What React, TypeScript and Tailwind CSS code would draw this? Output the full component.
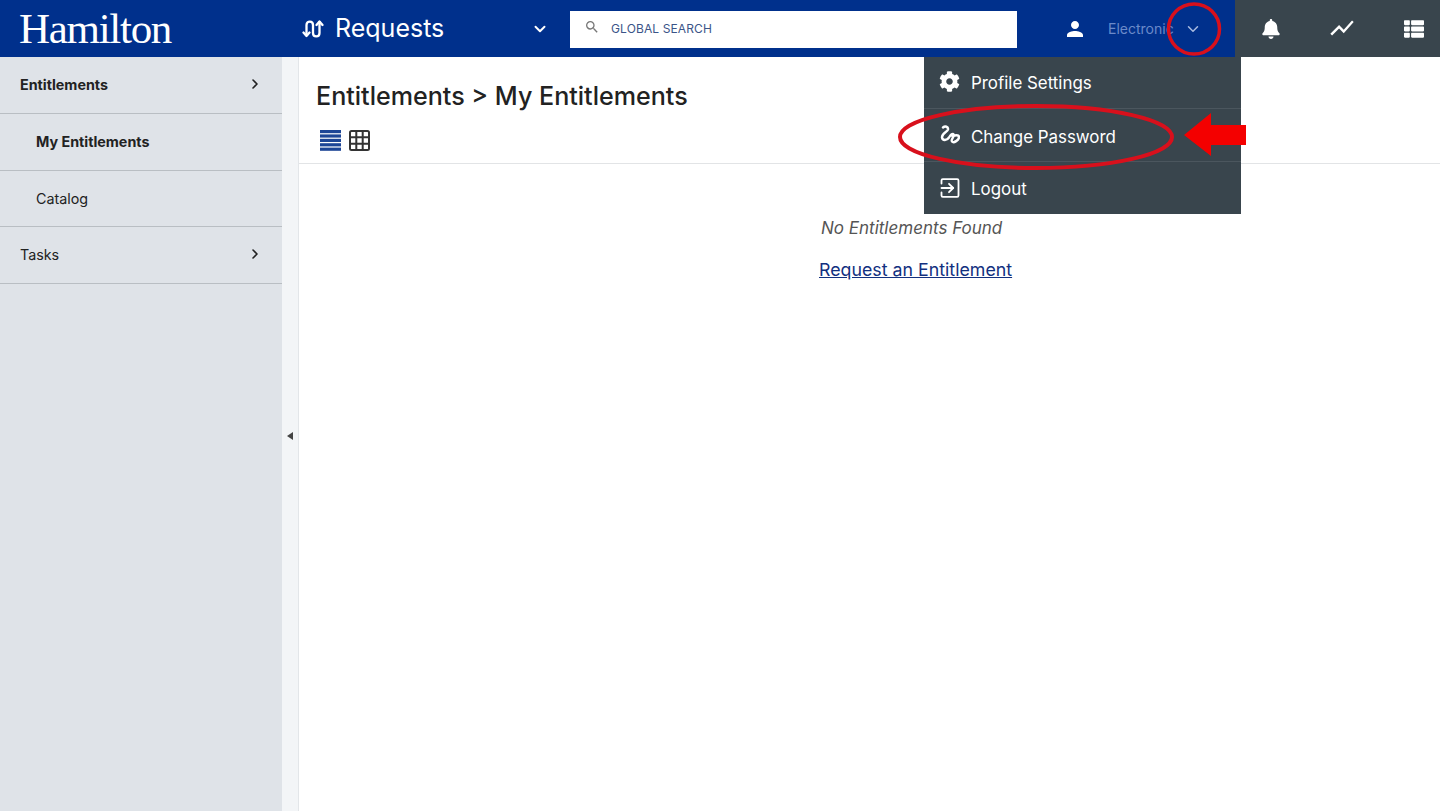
import { ChevronDown, ChevronRight } from "lucide-react";
import { FaBell, FaCog, FaThList } from "react-icons/fa";
import { MdPerson, MdSearch, MdShowChart } from "react-icons/md";

function RequestsIcon() {
  return (
    <svg width="22" height="20" viewBox="0 0 22 20" fill="none" stroke="currentColor" strokeWidth="2.3" strokeLinecap="round" strokeLinejoin="round">
      <path d="M1.500 13.500 L4.500 17 L7.500 13.500" />
      <path d="M4.500 16 V6 C4.500 1.500 11 1.500 11 6 V14 C11 18.500 17.500 18.500 17.500 14 V3" />
      <path d="M14.500 6 L17.500 2.500 L20.500 6" />
    </svg>
  );
}

function SquiggleIcon() {
  return (
    <svg width="20" height="20" viewBox="0 0 20 20" fill="none" stroke="currentColor" strokeWidth="2.4" strokeLinecap="round" strokeLinejoin="round">
      <path d="M3 2.500 C5 0.800 8.500 1.500 8 4.500 C7.500 7 1.500 8.500 2 12.500 C2.500 16 7 15.500 9 12.500 C10.500 10 13 7.500 13.800 9.800 C14.300 12 10.500 14.500 12 16.500 C13.800 18.500 19 15 19 12 C19 9.500 15 10 12.500 11.500" />
    </svg>
  );
}

function LogoutIcon() {
  return (
    <svg width="20" height="20" viewBox="0 0 20 20" fill="none" stroke="currentColor" strokeWidth="1.8" strokeLinecap="round" strokeLinejoin="round">
      <path d="M1.500 5.500 V2.500 C1.500 1.800 2 1.200 2.800 1.200 H17.200 C18 1.200 18.500 1.800 18.500 2.500 V17.500 C18.500 18.200 18 18.800 17.200 18.800 H2.800 C2 18.800 1.500 18.200 1.500 17.500 V14.500" />
      <path d="M1.500 10 H13" />
      <path d="M9 5.800 L13.200 10 L9 14.200" />
    </svg>
  );
}

function ListViewIcon() {
  return (
    <svg width="21" height="22" viewBox="0 0 21 22" fill="#1d4596">
      <rect x="0" y="1" width="21" height="3.200" />
      <rect x="0" y="5.400" width="21" height="3.200" />
      <rect x="0" y="9.800" width="21" height="3.200" />
      <rect x="0" y="14.200" width="21" height="3.200" />
      <rect x="0" y="18.600" width="21" height="3.200" />
    </svg>
  );
}

function GridViewIcon() {
  return (
    <svg width="21" height="21" viewBox="0 0 21 21" fill="none" stroke="#333" strokeWidth="2">
      <rect x="1" y="1" width="19" height="19" rx="1.500" />
      <path d="M7.300 1 V20 M13.700 1 V20 M1 7.300 H20 M1 13.700 H20" />
    </svg>
  );
}

const sideItems = [
  { label: "Entitlements", bold: true, sub: false, arrow: true, h: "h-[57px]" },
  { label: "My Entitlements", bold: true, sub: true, arrow: false, h: "h-[57px]" },
  { label: "Catalog", bold: false, sub: true, arrow: false, h: "h-[56px]" },
  { label: "Tasks", bold: false, sub: false, arrow: true, h: "h-[57px]" },
];

export default function App() {
  return (
    <div className="relative h-[811px] w-[1440px] overflow-hidden bg-white font-['Inter',sans-serif] text-[#222]">
      {/* Header */}
      <header className="flex h-[57px] items-center bg-[#00308c] text-white">
        <div className="w-[301px] pl-[19px] font-['Liberation_Serif',serif] text-[43px] leading-[57px] tracking-[-1.3px]">
          Hamilton
        </div>
        <div className="flex w-[269px] items-center">
          <span className="ml-[1px]">
            <RequestsIcon />
          </span>
          <span className="ml-[11px] text-[25px] leading-none">Requests</span>
          <ChevronDown className="ml-auto mr-[21px] h-[18px] w-[18px]" strokeWidth={2.6} />
        </div>
        <div className="mt-[1px] flex h-[37px] w-[447px] items-center bg-white pl-[14px] text-[12px] text-[#3b5488]">
          <MdSearch className="h-[16px] w-[16px] -translate-y-[2px] text-[#777]" />
          <span className="ml-[11px] tracking-[0.12px]">GLOBAL SEARCH</span>
        </div>
        <div className="flex h-full w-[218px] items-center pl-[46px]">
          <MdPerson className="h-[24px] w-[24px]" />
          <span className="ml-[21px] w-[67px] overflow-hidden text-[14px] whitespace-nowrap text-[#6b8ac9]">Electronic</span>
          <ChevronDown className="ml-[9px] h-[18px] w-[18px] text-[#a9bbe0]" strokeWidth={2} />
        </div>
        <div className="flex h-full flex-1 items-center bg-[#39454d] pl-[26px]">
          <FaBell className="h-[20px] w-[20px]" />
          <MdShowChart className="ml-[47px] h-[28px] w-[28px] -translate-y-[1px]" />
          <FaThList className="ml-[48px] h-[20px] w-[20px]" />
        </div>
      </header>

      <div className="flex h-[754px]">
        {/* Sidebar */}
        <aside className="w-[282px] bg-[#dfe3e8]">
          {sideItems.map((item) => (
            <div
              key={item.label}
              className={`flex items-center border-b border-[#b9bec3] pr-[19px] text-[14.3px] text-[#222] ${item.h} ${item.sub ? "pl-[36px]" : "pl-[20px]"} ${item.bold ? "font-bold" : ""}`}
            >
              <span>{item.label}</span>
              {item.arrow && <ChevronRight className="ml-auto h-[16px] w-[16px] -translate-y-[1px]" strokeWidth={2.4} />}
            </div>
          ))}
        </aside>

        {/* Collapse strip */}
        <div className="flex w-[17px] items-center justify-center border-r border-[#e3e6e9] bg-[#f3f5f7]">
          <div className="mt-[3px] h-0 w-0 border-y-[4px] border-r-[6px] border-y-transparent border-r-[#444]" />
        </div>

        {/* Main */}
        <main className="flex-1">
          <div className="h-[107px] border-b border-[#e2e4e6] pl-[17px]">
            <h1 className="pt-[23px] text-[25.1px] leading-[32px] font-medium text-[#222]">
              Entitlements &gt; My Entitlements
            </h1>
            <div className="mt-[17px] ml-[4px] flex items-center gap-[8px]">
              <ListViewIcon />
              <GridViewIcon />
            </div>
          </div>
          <div className="pl-[520px]">
            <p className="mt-[53px] ml-[2px] text-[17px] leading-[22px] text-[#555] italic">No Entitlements Found</p>
            <a href="#" className="mt-[19px] block text-[17.8px] leading-[24px] text-[#12307f] underline">
              Request an Entitlement
            </a>
          </div>
        </main>
      </div>

      {/* Profile dropdown */}
      <div className="absolute top-[57px] left-[924px] w-[317px] bg-[#39454d] text-[16.9px] text-white">
        <div className="flex h-[52px] items-center border-b border-[#4b565e] pl-[15px]">
          <FaCog className="h-[21px] w-[21px] -translate-y-[1px]" />
          <span className="ml-[11px] translate-y-[1px]">Profile Settings</span>
        </div>
        <div className="flex h-[53px] items-center border-b border-[#4b565e] pl-[16px]">
          <SquiggleIcon />
          <span className="ml-[11px] translate-y-[3px]">Change Password</span>
        </div>
        <div className="flex h-[52px] items-center pl-[16px]">
          <LogoutIcon />
          <span className="ml-[11px] translate-y-[2px]">Logout</span>
        </div>
      </div>

      {/* Red annotations */}
      <svg className="absolute top-0 left-0" width="1440" height="811" fill="none">
        <ellipse cx="1194" cy="29" rx="25.500" ry="25" stroke="#d8101c" strokeWidth="3.500" />
        <ellipse cx="1036" cy="137" rx="136" ry="31" stroke="#d8101c" strokeWidth="4" />
        <path d="M1184 135 L1211 113 V125 H1246 V145 H1211 V156 Z" fill="#f40000" />
      </svg>
    </div>
  );
}
